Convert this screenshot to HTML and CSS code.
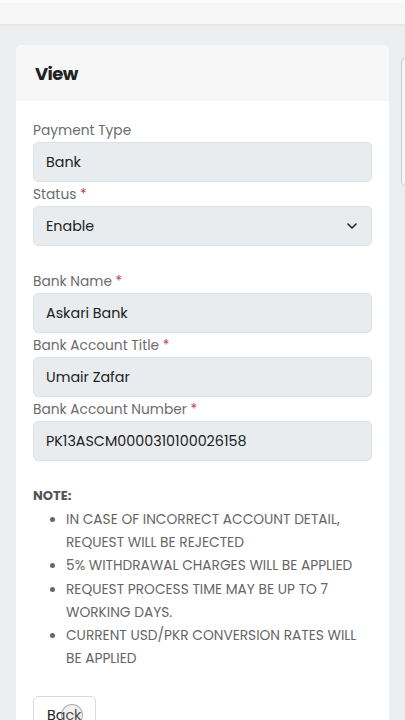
FILE: index.html
```html
<!DOCTYPE html>
<html lang="en">
<head>
<meta charset="utf-8">
<meta name="viewport" content="width=device-width, initial-scale=1">
<title>View</title>
<link rel="stylesheet" href="styles.css">
</head>
<body>
<div class="topbar"></div>
<div class="main">
  <div class="card">
    <div class="card-header">View</div>
    <div class="card-body">
      <label class="lbl">Payment Type</label>
      <div class="field">Bank</div>
      <label class="lbl">Status <span class="req">*</span></label>
      <div class="field select">Enable
        <svg class="chev" width="10" height="6" viewBox="0 0 10 6"><path d="M1 1l4 4 4-4" fill="none" stroke="#222" stroke-width="1.6" stroke-linecap="round" stroke-linejoin="round"/></svg>
      </div>
      <label class="lbl gap">Bank Name <span class="req">*</span></label>
      <div class="field">Askari Bank</div>
      <label class="lbl">Bank Account Title <span class="req">*</span></label>
      <div class="field">Umair Zafar</div>
      <label class="lbl">Bank Account Number <span class="req">*</span></label>
      <div class="field">PK13ASCM0000310100026158</div>
      <div class="note">NOTE:</div>
      <ul class="notes">
        <li>IN CASE OF INCORRECT ACCOUNT DETAIL, REQUEST WILL BE REJECTED</li>
        <li>5% WITHDRAWAL CHARGES WILL BE APPLIED</li>
        <li>REQUEST PROCESS TIME MAY BE UP TO 7 WORKING DAYS.</li>
        <li>CURRENT USD/PKR CONVERSION RATES WILL BE APPLIED</li>
      </ul>
      <button class="btn">Back<span class="touch"></span></button>
    </div>
  </div>
  <div class="side-card"></div>
</div>
</body>
</html>
```
FILE: styles.css
```css
html, body {
  margin: 0;
  padding: 0;
  overflow: hidden;
}
body {
  background: #eceef0;
  font-family: "Poppins", "Open Sans", "DejaVu Sans", sans-serif;
  width: 405px;
  height: 720px;
}
.topbar {
  height: 21px;
  background: #f7f7f8;
  border-top: 3px solid #fbfbfb;
  box-shadow: 0 1px 3px rgba(0,0,0,0.06);
}
.main {
  display: flex;
  align-items: flex-start;
  gap: 12px;
  padding: 21px 0 0 16px;
}
.card {
  flex: 0 0 373px;
  background: #fff;
  border-radius: 6px;
  overflow: hidden;
}
.card-header {
  height: 56px;
  background: #f7f7f8;
  padding-left: 19px;
  box-sizing: border-box;
  display: flex;
  align-items: center;
  font-size: 18px;
  font-weight: 700;
  color: #222;
  letter-spacing: -0.6px;
}
.card-body {
  padding: 17px 17px 30px 17px;
}
.lbl {
  display: block;
  font-size: 13.75px;
  line-height: 21px;
  color: #6c6c6c;
  margin: 2px 0 1px;
}
.lbl.gap {
  margin-top: 25px;
}
.req {
  color: #b8485c;
}
.field {
  height: 40px;
  box-sizing: border-box;
  background: #e9ecef;
  border: 1px solid #dfe2e5;
  border-radius: 5px;
  padding: 0 12px;
  display: flex;
  align-items: center;
  font-size: 14.3px;
  color: #222;
}
.field.select {
  justify-content: space-between;
  padding-right: 14px;
}
.chev {
  display: block;
}
.note {
  margin-top: 25px;
  font-size: 13px;
  line-height: 20px;
  font-weight: 700;
  color: #555;
}
.notes {
  margin: 2px 0 0;
  padding-left: 33px;
  font-size: 13.75px;
  line-height: 23.2px;
  color: #666;
}
.btn {
  position: relative;
  margin-top: 26px;
  height: 38px;
  padding: 0 14px 0 13px;
  background: #fff;
  border: 1px solid #d9dbde;
  border-radius: 5px;
  font-family: inherit;
  font-size: 14.3px;
  color: #222;
}
.touch {
  position: absolute;
  left: 27px;
  top: 7px;
  width: 20px;
  height: 20px;
  border: 1.5px solid rgba(120,120,120,0.55);
  border-radius: 50%;
  background: rgba(200,200,200,0.25);
}
.side-card {
  flex: 0 0 120px;
  margin-top: 12px;
  height: 128px;
  background: #f6f7f8;
  border: 1px solid #c9ccd0;
  border-radius: 6px;
}
```
